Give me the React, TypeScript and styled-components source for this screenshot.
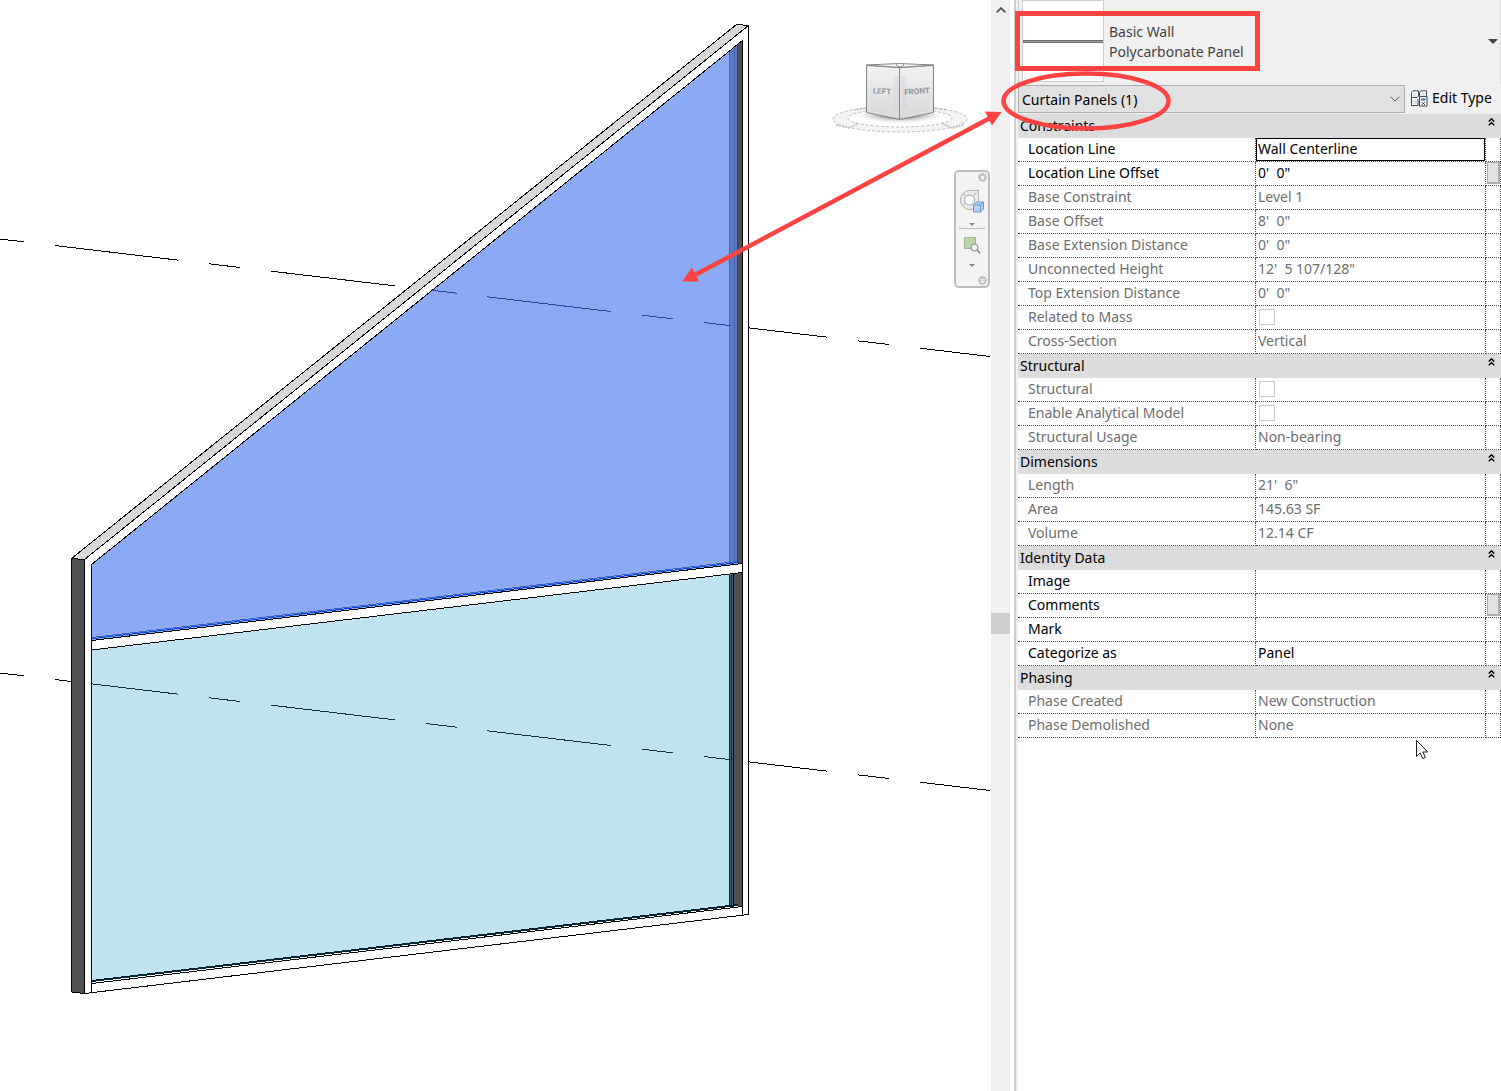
import React, { useState } from "react";
import styled, { createGlobalStyle } from "styled-components";

const GlobalStyle = createGlobalStyle`
  *, *::before, *::after { box-sizing: border-box; }
  body {
    margin: 0;
    background: #fff;
    color: #000;
    font-family: "Noto Sans", "Open Sans", sans-serif;
    font-size: 14px;
    line-height: 20px;
  }
  button, input, select { font: inherit; color: inherit; margin: 0; }
`;

const Workspace = styled.main`
  position: relative;
  display: flex;
  min-height: 100vh;
  overflow: hidden;
`;

const Viewport = styled.section`
  position: relative;
  flex: 1;
  min-width: 0;
  overflow: hidden;
`;

const ModelDrawing = styled.svg`
  display: block;
`;

const CubeOverlay = styled.div`
  position: absolute;
  top: 56px;
  right: 20px;
`;

const NavBar = styled.nav`
  position: absolute;
  top: 170px;
  right: 1px;
  display: flex;
  flex-direction: column;
  align-items: center;
  width: 36px;
  height: 118px;
  padding: 0 1px 1px;
  border: 2px solid #bdbdbd;
  border-radius: 5px;
  background: #f3f3f3;
`;

const NavButton = styled.button<{ $height: number; $end?: boolean }>`
  display: flex;
  align-items: center;
  justify-content: center;
  align-self: ${(p) => (p.$end ? "flex-end" : "center")};
  height: ${(p) => p.$height}px;
  padding: 0;
  border: 0;
  background: none;
`;

const NavDivider = styled.div`
  width: 26px;
  height: 1px;
  flex: none;
  background: #bdbdbd;
`;

const Scrollbar = styled.div`
  display: flex;
  flex-direction: column;
  flex: none;
  width: 19px;
  margin-right: 4px;
  background: #f0f0f0;
`;

const ScrollButton = styled.button`
  height: 20px;
  padding: 0;
  border: 0;
  background: none;
  line-height: 0;
`;

const ScrollSpace = styled.div<{ $share: number }>`
  flex: ${(p) => p.$share};
`;

const ScrollThumb = styled.div`
  height: 21px;
  background: #cdcdcd;
`;

const Palette = styled.aside`
  flex: none;
  width: 487px;
  border-left: 2px solid #cdcdcd;
  padding-left: 2px;
  background: linear-gradient(to right, #f0f0f0 2px, #fff 2px);
`;

const TypeSelector = styled.button`
  display: flex;
  align-items: center;
  width: 100%;
  height: 84px;
  padding: 0 2px 2px 3px;
  border: 0;
  border-left: 1px solid #cdcdcd;
  border-right: 1px solid #dcdcdc;
  background: #f0f0f0;
  color: #444;
  text-align: left;
`;

const Thumbnail = styled.span`
  display: flex;
  align-items: center;
  width: 82px;
  height: 82px;
  border: 1px solid #cdcdcd;
  background: #fff;

  &::before {
    content: "";
    flex: 1;
    height: 3px;
    border-top: 1px solid #6a6a6a;
    border-bottom: 1px solid #6a6a6a;
    background: #a0a0a0;
  }
`;

const TypeName = styled.span`
  flex: 1;
  padding: 2px 0 0 5px;
`;

const FilterBar = styled.div`
  display: flex;
  align-items: center;
  height: 30px;
  background: #f0f0f0;
`;

const FilterBox = styled.label`
  position: relative;
  display: flex;
  flex: 1;
`;

const FilterSelect = styled.select`
  appearance: none;
  width: 100%;
  height: 28px;
  padding: 2px 24px 0 3px;
  border: 1px solid #adadad;
  border-radius: 0;
  background: #e1e1e1;
`;

const FilterArrow = styled.svg`
  position: absolute;
  top: 11px;
  right: 5px;
  pointer-events: none;
`;

const EditTypeButton = styled.button`
  display: flex;
  align-items: center;
  gap: 4px;
  width: 96px;
  padding: 0 0 2px 6px;
  border: 0;
  background: none;
  white-space: nowrap;
`;

const PropertyTable = styled.table`
  width: 100%;
  table-layout: fixed;
  border-collapse: separate;
  border-spacing: 0;
`;

const GroupCell = styled.th`
  height: 24px;
  padding: 0;
  background: #dcdcdc;
  font-weight: 400;
`;

const GroupButton = styled.button`
  display: flex;
  justify-content: space-between;
  width: 100%;
  height: 24px;
  padding: 2px 6px 0 2px;
  border: 0;
  background: none;
  text-align: left;
`;

const GroupArrow = styled.svg<{ $open: boolean }>`
  margin-top: 2px;
  transform: ${(p) => (p.$open ? "none" : "rotate(180deg)")};
`;

const Cell = styled.td<{ $muted?: boolean }>`
  height: 24px;
  padding: 0 0 2px;
  border-right: 1px dotted #555;
  border-bottom: 1px dotted #555;
  color: ${(p) => (p.$muted ? "#6d6d6d" : "#000")};
  white-space: pre;
  line-height: 20px;
`;

const LabelCell = styled(Cell)`
  padding-left: 10px;
`;

const ValueCell = styled(Cell)`
  padding-left: 2px;
`;

const ControlCell = styled(Cell)`
  padding: 0;
`;

const ValueInput = styled.input`
  display: block;
  width: 100%;
  height: 23px;
  padding: 0 0 2px 2px;
  border: 0;
  background: none;
  outline: none;
`;

const ValueSelect = styled.select<{ $active?: boolean }>`
  appearance: none;
  display: block;
  width: 100%;
  height: 23px;
  padding: 0 0 1px ${(p) => (p.$active ? 1 : 2)}px;
  border: ${(p) => (p.$active ? "1px solid #000" : "0")};
  border-radius: 0;
  background: #fff;
`;

const CheckValue = styled.input`
  appearance: none;
  display: block;
  width: 16px;
  height: 16px;
  margin: 0 0 1px 3px;
  border: 1px solid #cccccc;
  background: #fff;
`;

const AssociateButton = styled.button`
  display: block;
  width: 13px;
  height: 22px;
  margin: 0 0 1px 1px;
  padding: 0;
  border: 1px solid #adadad;
  border-right-width: 2px;
  border-bottom-width: 2px;
  background: #e1e1e1;
`;

const Annotations = styled.svg`
  position: absolute;
  top: 0;
  right: 0;
  pointer-events: none;
`;

type Row = {
  label: string;
  value?: string;
  kind: "text" | "input" | "select" | "check";
  active?: boolean;
  button?: boolean;
};

type Group = { name: string; rows: Row[] };

const text = (label: string, value: string): Row => ({ label, value, kind: "text" });
const check = (label: string): Row => ({ label, kind: "check" });

const groups: Group[] = [
  {
    name: "Constraints",
    rows: [
      { label: "Location Line", value: "Wall Centerline", kind: "select", active: true },
      { label: "Location Line Offset", value: "0'  0\"", kind: "input", button: true },
      text("Base Constraint", "Level 1"),
      text("Base Offset", "8'  0\""),
      text("Base Extension Distance", "0'  0\""),
      text("Unconnected Height", "12'  5 107/128\""),
      text("Top Extension Distance", "0'  0\""),
      check("Related to Mass"),
      text("Cross-Section", "Vertical"),
    ],
  },
  {
    name: "Structural",
    rows: [check("Structural"), check("Enable Analytical Model"), text("Structural Usage", "Non-bearing")],
  },
  {
    name: "Dimensions",
    rows: [text("Length", "21'  6\""), text("Area", "145.63 SF"), text("Volume", "12.14 CF")],
  },
  {
    name: "Identity Data",
    rows: [
      { label: "Image", value: "", kind: "input" },
      { label: "Comments", value: "", kind: "input", button: true },
      { label: "Mark", value: "", kind: "input" },
      { label: "Categorize as", value: "Panel", kind: "select" },
    ],
  },
  {
    name: "Phasing",
    rows: [text("Phase Created", "New Construction"), text("Phase Demolished", "None")],
  },
];

function PropertyRow({ row }: { row: Row }) {
  const id = "prop-" + row.label.toLowerCase().replace(/\s+/g, "-");
  const muted = row.kind === "text" || row.kind === "check";
  return (
    <tr>
      <LabelCell $muted={muted}>
        {row.kind === "text" ? row.label : <label htmlFor={id}>{row.label}</label>}
      </LabelCell>
      {row.kind === "text" && <ValueCell $muted>{row.value}</ValueCell>}
      {row.kind === "check" && (
        <ControlCell>
          <CheckValue id={id} type="checkbox" disabled />
        </ControlCell>
      )}
      {row.kind === "input" && (
        <ControlCell>
          <ValueInput id={id} type="text" defaultValue={row.value} />
        </ControlCell>
      )}
      {row.kind === "select" && (
        <ControlCell>
          <ValueSelect id={id} $active={row.active}>
            <option>{row.value}</option>
          </ValueSelect>
        </ControlCell>
      )}
      <ControlCell>
        {row.button && <AssociateButton type="button" aria-label={"Associate " + row.label} />}
      </ControlCell>
    </tr>
  );
}

function PropertyGroup({ group }: { group: Group }) {
  const [open, setOpen] = useState(true);
  return (
    <tbody>
      <tr>
        <GroupCell colSpan={3} scope="rowgroup">
          <GroupButton type="button" aria-expanded={open} onClick={() => setOpen(!open)}>
            {group.name}
            <GroupArrow $open={open} width="7" height="8" viewBox="0 0 7 8" fill="none" stroke="#000" strokeWidth="1.5">
              <path d="M.7 3.5 3.5.9l2.8 2.6M.7 7.3l2.8-2.6 2.8 2.6" />
            </GroupArrow>
          </GroupButton>
        </GroupCell>
      </tr>
      {open && group.rows.map((row) => <PropertyRow key={row.label} row={row} />)}
    </tbody>
  );
}

type Dash = [number, number, string];

const upperDashes: Dash[] = [
  [0, 24, "#000"], [55, 178, "#000"], [209, 240, "#000"], [271, 395, "#000"],
  [432, 457, "#2746a0"], [487, 611, "#2746a0"], [642, 673, "#2746a0"], [704, 731, "#2746a0"],
  [749, 827, "#000"], [858, 889, "#000"], [920, 990, "#000"],
];

const lowerDashes: Dash[] = [
  [0, 24, "#000"], [55, 71, "#000"], [92, 178, "#12303c"], [209, 240, "#12303c"],
  [271, 395, "#12303c"], [426, 457, "#12303c"], [487, 611, "#12303c"], [642, 673, "#12303c"],
  [704, 731, "#12303c"], [749, 827, "#000"], [858, 889, "#000"], [920, 990, "#000"],
];

function LevelLine({ y, dashes }: { y: number; dashes: Dash[] }) {
  const slope = 0.1187;
  return (
    <g>
      {dashes.map(([a, b, color]) => (
        <line key={a} x1={a} y1={y + a * slope} x2={b} y2={y + b * slope} stroke={color} />
      ))}
    </g>
  );
}

function Model() {
  return (
    <ModelDrawing width="991" height="1000" viewBox="0 0 991 1000" shapeRendering="crispEdges" role="img" aria-label="3D view of a curtain wall">
      <path d="M71.5 558.5 736.5 24.5 748.5 25.5 84.5 559.5Z" fill="#d8d8d8" stroke="#000" />
      <path d="M84.5 559.5 748.5 25.5V914.5L84.5 993.5Z" fill="#fff" stroke="#000" />
      <path d="M71.5 558.5 84.5 559.5V993.5L71.5 992Z" fill="#505050" stroke="#000" />

      <path d="M91.5 564.5 742.5 40.5V563.5L91.5 640.5Z" fill="#8ca9f3" stroke="#000" />
      <path d="M738 44.5 742 41.5V563H738Z" fill="#505050" />
      <path d="M729 52 738 44.5V563L729 564Z" fill="#5b7bc6" />
      <path d="M729.5 52V563M734.5 48V563" stroke="#4263b0" />
      <path d="M737.5 45V563" stroke="#0f3fc4" />
      <path d="M92 637.5 737 561.5" stroke="#3e62bd" />
      <path d="M92 638.7 737 562.7" stroke="#0b48e6" />
      <path d="M91.5 640.5 742.5 563.5" stroke="#000" />

      <path d="M91.5 650 742.5 572.5V906.5L91.5 983.5Z" fill="#fff" stroke="#000" />
      <path d="M92 650.5 731 574.5V905L92 981Z" fill="#bfe3f1" />
      <path d="M734 573.8 742 573V906H734Z" fill="#505050" />
      <path d="M729 574.5 734 574V905L729 905.5Z" fill="#3c677e" />
      <path d="M729.5 574.5V905M731.5 574.5V905" stroke="#08283a" />
      <path d="M733.5 574V905" stroke="#000" />
      <path d="M91.5 981 738 905" stroke="#062331" strokeWidth="2" />
      <path d="M91.5 564.5V983.5M742.5 563.5V572.5M742.5 906.5V914.5M91.5 983.5V992" stroke="#000" />

      <LevelLine y={239} dashes={upperDashes} />
      <LevelLine y={673} dashes={lowerDashes} />
    </ModelDrawing>
  );
}

function ViewCube() {
  return (
    <svg width="140" height="80" viewBox="831 56 140 80" role="img" aria-label="View cube">
      <defs>
        <linearGradient id="face" x1="0" y1="0" x2="0" y2="1">
          <stop offset="0" stopColor="#f1f1f1" />
          <stop offset="1" stopColor="#d9d9d9" />
        </linearGradient>
        <radialGradient id="shade">
          <stop offset="0.3" stopColor="#8a8a8a" />
          <stop offset="1" stopColor="#fff" stopOpacity="0" />
        </radialGradient>
      </defs>
      <ellipse cx="900" cy="119" rx="67" ry="13" fill="#f4f4f4" stroke="#bcbcbc" strokeDasharray="3 2" />
      <ellipse cx="900" cy="118" rx="52" ry="9" fill="#fff" stroke="#bcbcbc" strokeDasharray="3 2" />
      <path d="M836 125 850 128 858 123M942 123 952 128 964 125" fill="none" stroke="#c4c4c4" strokeDasharray="2 1" strokeWidth="2" />
      <path d="M854 110 866 108V112M946 110 934 108V112" fill="none" stroke="#b0b0b0" strokeDasharray="2 1" />
      <ellipse cx="900" cy="115" rx="46" ry="9" fill="url(#shade)" />
      <path d="M866.5 65.5 899.5 67.5V119.5L866.5 112.5Z" fill="url(#face)" stroke="#858585" />
      <path d="M899.5 67.5 933.5 65.5V112.5L899.5 119.5Z" fill="url(#face)" stroke="#858585" />
      <path d="M866.5 65 899 63.5 933.5 65 900 67.5Z" fill="#f5f5f5" stroke="#858585" />
      <ellipse cx="900" cy="65" rx="4" ry="1.5" fill="#fff" stroke="#999" />
      <path d="M893 76H899V109L893 108ZM901 76H907V108L901 109Z" fill="#d3d6db" opacity=".5" />
      <g fill="#92959b" fontFamily="Roboto, 'Liberation Sans', sans-serif" fontWeight="700" fontSize="8" textAnchor="middle">
        <text x="882" y="94" transform="rotate(4 882 91)">LEFT</text>
        <text x="917" y="94" transform="rotate(-4 917 91)">FRONT</text>
      </g>
    </svg>
  );
}

const DownTick = () => (
  <svg width="6" height="3" viewBox="0 0 6 3"><path d="M0 0h6L3 3Z" fill="#8b8b8b" /></svg>
);

function NavigationBar() {
  return (
    <NavBar aria-label="Navigation bar">
      <NavButton type="button" $height={10} $end aria-label="Close">
        <svg width="9" height="9" viewBox="0 0 9 9">
          <circle cx="4.5" cy="4.5" r="4.2" fill="#bcbcbc" />
          <path d="m2.7 2.7 3.6 3.6m0-3.6L2.7 6.3" stroke="#fff" strokeWidth="1.2" />
        </svg>
      </NavButton>
      <NavButton type="button" $height={38} aria-label="Steering wheel">
        <svg width="26" height="26" viewBox="0 0 26 26" fill="none">
          <path d="M10.5 2.5H19.5V12A9 9.500 0 1 1 10.5 2.500Z" fill="#ececec" stroke="#adb1b5" />
          <circle cx="10.500" cy="12" r="5" fill="#fff" stroke="#9fa4a9" />
          <path d="m4.500 17 2.500-2M6.500 8 4 5.500M14.500 8l3-4" stroke="#adb1b5" />
          <path d="m14.500 17 3-3h7v7l-3 3h-7Z" fill="#b2d2ef" stroke="#659aca" />
          <path d="M14.500 17h7v7m0-7 3-3" stroke="#659aca" />
        </svg>
      </NavButton>
      <NavButton type="button" $height={8} aria-label="Wheel options"><DownTick /></NavButton>
      <NavDivider />
      <NavButton type="button" $height={32} aria-label="Zoom region">
        <svg width="17" height="17" viewBox="0 0 17 17" fill="none">
          <path d="M.5.5h11v11H.5Z" fill="#b8d3a7" stroke="#98b989" />
          <circle cx="10.5" cy="10.5" r="3.3" fill="#f8f8f8" stroke="#999fa3" strokeWidth="1.3" />
          <path d="m13 13 3.3 3.3" stroke="#8f9599" strokeWidth="1.8" />
        </svg>
      </NavButton>
      <NavButton type="button" $height={8} aria-label="Zoom options"><DownTick /></NavButton>
      <ScrollSpace $share={1} />
      <NavButton type="button" $height={10} $end aria-label="Customize">
        <svg width="9" height="9" viewBox="0 0 9 9">
          <circle cx="4.5" cy="4.5" r="4.2" fill="#bcbcbc" />
          <path d="M2 3.3h5M2.5 5h4l-2 1.8Z" stroke="#fff" fill="#fff" strokeWidth=".8" />
        </svg>
      </NavButton>
    </NavBar>
  );
}

export default function App() {
  return (
    <>
      <GlobalStyle />
      <Workspace>
        <Viewport>
          <Model />
          <CubeOverlay><ViewCube /></CubeOverlay>
          <NavigationBar />
        </Viewport>
        <Scrollbar>
          <ScrollButton type="button" aria-label="Scroll up">
            <svg width="10" height="6" viewBox="0 0 10 6" fill="none" stroke="#555" strokeWidth="1.8">
              <path d="m.7 5.3 4.3-4.3 4.3 4.3" />
            </svg>
          </ScrollButton>
          <ScrollSpace $share={593} />
          <ScrollThumb />
          <ScrollSpace $share={457} />
        </Scrollbar>
        <Palette>
          <TypeSelector type="button">
            <Thumbnail />
            <TypeName>Basic Wall<br />Polycarbonate Panel</TypeName>
            <svg width="10" height="5" viewBox="0 0 10 5"><path d="M0 0h10L5 5Z" fill="#444" /></svg>
          </TypeSelector>
          <FilterBar>
            <FilterBox>
              <FilterSelect aria-label="Properties filter">
                <option>Curtain Panels (1)</option>
              </FilterSelect>
              <FilterArrow width="10" height="6" viewBox="0 0 10 6" fill="none" stroke="#555">
                <path d="m.5.7 4.5 4.5L9.5.7" />
              </FilterArrow>
            </FilterBox>
            <EditTypeButton type="button">
              <svg width="17" height="17" viewBox="0 0 17 17" fill="none" stroke="#3f4756">
                <path d="M.5 2.5 2 .8h5.500V6L6 7.500H.5ZM8.500 2.500 10 .8h5.500V6L14 7.500H8.500Z" fill="#f8fafc" />
                <path d="M2.500 3h3v4h-3ZM10.500 3h3v3h-3Z" fill="#dfe4ea" stroke="none" />
                <path d="M.5 7.500V15.500H7V9" fill="#f8fafc" />
                <path d="M2 10h4v4H2Z" fill="#dfe4ea" stroke="none" />
                <path d="M8.500 6.500h7.500v9.500H8.500Z" fill="#fff" />
                <path d="M10 9.500h4.500" stroke="#2f73c8" strokeWidth="2" />
                <path d="M10.500 12.500h1m1.500 0h1M11.500 13.500h1.500M10.500 14.500h1m1.500 0h1" />
              </svg>
              Edit Type
            </EditTypeButton>
          </FilterBar>
          <PropertyTable aria-label="Properties">
            <colgroup>
              <col style={{ width: 238 }} />
              <col />
              <col style={{ width: 15 }} />
            </colgroup>
            {groups.map((group) => <PropertyGroup key={group.name} group={group} />)}
          </PropertyTable>
        </Palette>
        <Annotations width="831" height="780" viewBox="670 0 831 780" fill="none" aria-hidden="true">
          <rect x="1017.5" y="13.5" width="240" height="55" stroke="#ff4343" strokeWidth="5" />
          <ellipse cx="1086" cy="101" rx="82.5" ry="27.5" stroke="#ff4343" strokeWidth="4.5" />
          <path d="M693 276 992 117" stroke="#ff4343" strokeWidth="4.5" />
          <path d="M682 281.5 692 267.5 699 281.5ZM1001.5 112 985 111.5 992 125.5Z" fill="#ff4343" />
          <path d="M1416.5 740.5v16l3.7-3.5 2.5 5.6 2.7-1.2-2.5-5.4h4.9Z" fill="#fff" stroke="#1a1a2a" />
        </Annotations>
      </Workspace>
    </>
  );
}
